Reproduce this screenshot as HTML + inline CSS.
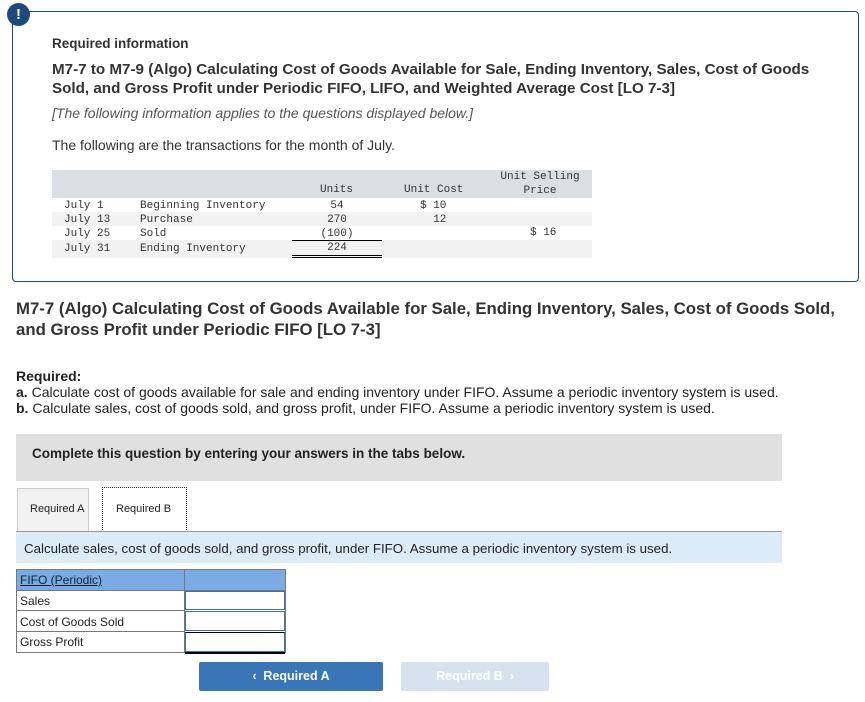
<!DOCTYPE html>
<html><head><style>
*{margin:0;padding:0;box-sizing:border-box}
body{width:865px;height:702px;background:#fff;font-family:"Liberation Sans",Arial,sans-serif;color:#222;position:relative;overflow:hidden}
.a{position:absolute}
.mono{font-family:"Liberation Mono",monospace;font-size:11px;color:#333}
.box{left:12px;top:11px;width:847px;height:271px;border:1.5px solid #1d4a7a;border-radius:4px}
.ic{left:7px;top:3px;width:23px;height:23px;border-radius:50%;background:#1d4a7a;color:#fff;font-weight:bold;font-size:15px;text-align:center;line-height:23px}
</style></head><body>
<div class="a box"></div>
<div class="a ic">!</div>
<div class="a" style="left:52px;top:36px;font-size:13.5px;font-weight:bold;color:#333">Required information</div>
<div class="a" style="left:52px;top:60px;width:775px;font-size:15.2px;font-weight:bold;color:#333;line-height:19px">M7-7 to M7-9 (Algo) Calculating Cost of Goods Available for Sale, Ending Inventory, Sales, Cost of Goods Sold, and Gross Profit under Periodic FIFO, LIFO, and Weighted Average Cost [LO 7-3]</div>
<div class="a" style="left:52px;top:105px;font-size:14px;font-style:italic;color:#555">[The following information applies to the questions displayed below.]</div>
<div class="a" style="left:52px;top:137px;font-size:14px;color:#333">The following are the transactions for the month of July.</div>
<div class="a" style="left:52px;top:170px;width:540px;height:28px;background:#dcdee6"></div>
<div class="a" style="left:52px;top:212px;width:540px;height:14px;background:#f2f2f2"></div>
<div class="a" style="left:52px;top:240px;width:540px;height:18px;background:#f2f2f2"></div>
<div class="a mono" style="left:320px;top:184px">Units</div>
<div class="a mono" style="left:404px;top:184px">Unit Cost</div>
<div class="a mono" style="left:498px;top:170px;width:84px;text-align:center;line-height:14px">Unit Selling<br>Price</div>
<div class="a mono" style="left:64px;top:199px;line-height:14px">July 1<br>July 13<br>July 25</div>
<div class="a mono" style="left:64px;top:243px">July 31</div>
<div class="a mono" style="left:140px;top:199px;line-height:14px">Beginning Inventory<br>Purchase<br>Sold</div>
<div class="a mono" style="left:140px;top:243px">Ending Inventory</div>
<div class="a mono" style="left:292px;top:199px;width:90px;text-align:center;line-height:14px">54<br>270<br>(100)</div>
<div class="a mono" style="left:292px;top:242px;width:90px;text-align:center">224</div>
<div class="a" style="left:292px;top:240px;width:90px;border-top:1px solid #000"></div>
<div class="a" style="left:292px;top:255px;width:90px;height:3px;border-top:1px solid #000;border-bottom:1px solid #000"></div>
<div class="a mono" style="left:420px;top:199px;line-height:14px">$ 10<br>&nbsp;&nbsp;12</div>
<div class="a mono" style="left:530px;top:227px">$ 16</div>

<div class="a" style="left:16px;top:298px;width:830px;font-size:16.8px;font-weight:bold;color:#333;line-height:21px">M7-7 (Algo) Calculating Cost of Goods Available for Sale, Ending Inventory, Sales, Cost of Goods Sold, and Gross Profit under Periodic FIFO [LO 7-3]</div>
<div class="a" style="left:16px;top:368px;font-size:14px;color:#222;line-height:16px"><b>Required:</b><br><b>a.</b> Calculate cost of goods available for sale and ending inventory under FIFO. Assume a periodic inventory system is used.<br><b>b.</b> Calculate sales, cost of goods sold, and gross profit, under FIFO. Assume a periodic inventory system is used.</div>

<div class="a" style="left:16px;top:434px;width:766px;height:47px;background:#e0e0e0"></div>
<div class="a" style="left:32px;top:446px;font-size:13.5px;font-weight:bold;color:#222">Complete this question by entering your answers in the tabs below.</div>

<div class="a" style="left:17px;top:488px;width:72px;height:44px;background:#f2f2f2;border:1px solid #ccc;border-bottom:none"></div>
<div class="a" style="left:30px;top:503px;font-size:11px">Required A</div>
<div class="a" style="left:102px;top:487px;width:85px;height:45px;background:#fff;border:1px dotted #333;border-bottom:none"></div>
<div class="a" style="left:116px;top:503px;font-size:11px">Required B</div>
<div class="a" style="left:16px;top:531px;width:766px;height:1px;background:#999"></div>
<div class="a" style="left:16px;top:532px;width:766px;height:31px;background:#dbebf8"></div>
<div class="a" style="left:24px;top:541px;font-size:13.3px;color:#222">Calculate sales, cost of goods sold, and gross profit, under FIFO. Assume a periodic inventory system is used.</div>

<div class="a" style="left:16px;top:569px;width:270px;height:84px;border:1px solid #777"></div>
<div class="a" style="left:16px;top:569px;width:270px;height:22px;background:#7aabe3;border:1px solid #777"></div>
<div class="a" style="left:184px;top:569px;width:1px;height:84px;background:#777"></div>
<div class="a" style="left:16px;top:610px;width:168px;height:1px;background:#777"></div>
<div class="a" style="left:16px;top:631px;width:168px;height:1px;background:#777"></div>
<div class="a" style="left:20px;top:573px;font-size:12px;text-decoration:underline;color:#123">FIFO (Periodic)</div>
<div class="a" style="left:20px;top:594px;font-size:12px">Sales</div>
<div class="a" style="left:20px;top:615px;font-size:12px">Cost of Goods Sold</div>
<div class="a" style="left:20px;top:635px;font-size:12px">Gross Profit</div>
<div class="a" style="left:185px;top:591px;width:100px;height:19px;border:1px solid #3a6fb0"></div>
<div class="a" style="left:185px;top:611px;width:100px;height:20px;border:1px solid #3a6fb0"></div>
<div class="a" style="left:185px;top:632px;width:100px;height:20px;border:1px solid #3a6fb0;border-top:1.5px solid #000;box-shadow:0 2px 0 #000"></div>

<div class="a" style="left:199px;top:662px;width:184px;height:29px;background:#3a75b8;border-radius:2px;color:#fff;font-size:12.5px;font-weight:bold;text-align:center;line-height:29px">&lsaquo;&nbsp;&nbsp;Required A</div>
<div class="a" style="left:401px;top:662px;width:148px;height:29px;background:#d6e2ef;border-radius:2px;color:#fff;font-size:12.5px;font-weight:bold;text-align:center;line-height:29px">Required B&nbsp;&nbsp;&rsaquo;</div>
</body></html>
